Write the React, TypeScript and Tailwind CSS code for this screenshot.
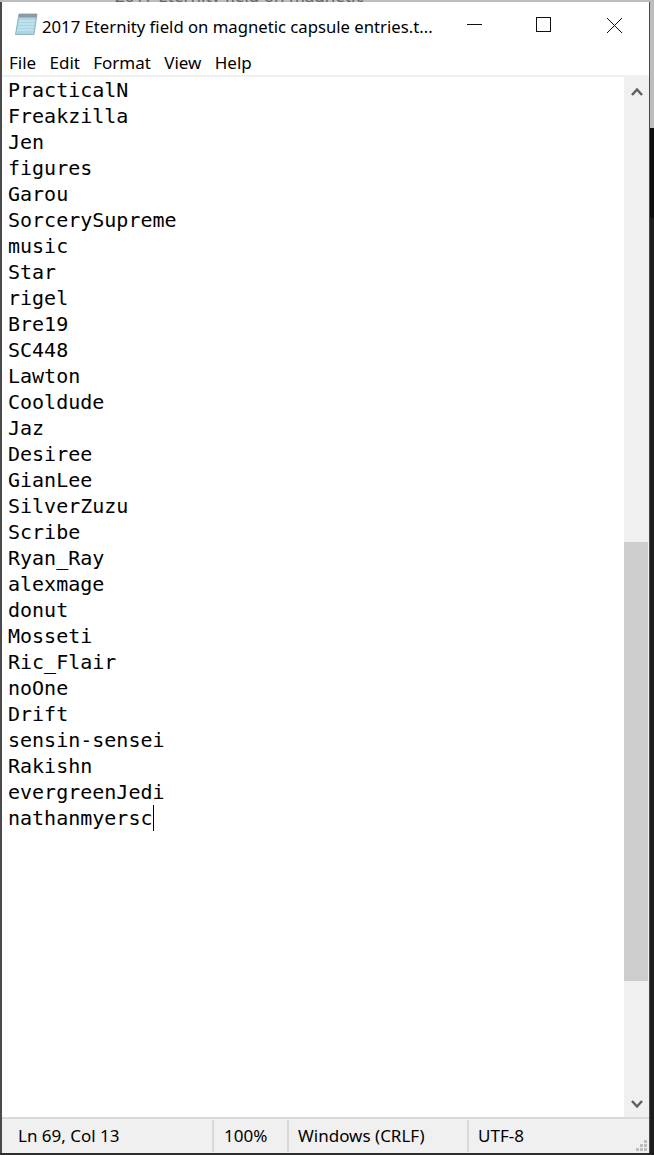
const names = [
  "PracticalN",
  "Freakzilla",
  "Jen",
  "figures",
  "Garou",
  "SorcerySupreme",
  "music",
  "Star",
  "rigel",
  "Bre19",
  "SC448",
  "Lawton",
  "Cooldude",
  "Jaz",
  "Desiree",
  "GianLee",
  "SilverZuzu",
  "Scribe",
  "Ryan_Ray",
  "alexmage",
  "donut",
  "Mosseti",
  "Ric_Flair",
  "noOne",
  "Drift",
  "sensin-sensei",
  "Rakishn",
  "evergreenJedi",
  "nathanmyersc",
];

const menus = ["File", "Edit", "Format", "View", "Help"];

function NotepadIcon() {
  return (
    <svg width="24" height="24" viewBox="0 0 24 24" className="shrink-0">
      <path d="M5 2h18l-3 20.500H1.500z" fill="#a9d5e4" stroke="#8fb4c4" strokeWidth="1" />
      <path d="M5 2h18l-.5 3.500H4.500z" fill="#8b9aa5" />
      <path d="M5 9h15.500M4.500 12h15.500M4 15h15.500M3.500 18h15.500" stroke="#d6edf4" strokeWidth="1" />
    </svg>
  );
}

function App() {
  return (
    <div className="w-[654px] h-[1155px] bg-[#2f2f2f] overflow-hidden font-['Noto_Sans',sans-serif] text-black">
      {/* desktop behind the window, only a sliver shows */}
      <div className="h-[2px] bg-[#bdbdbd] overflow-hidden pl-[115px] flex">
        <span className="text-[17px] leading-[8px] mt-[-8px] text-[#666] whitespace-nowrap">
          2017 Eternity field on magnetic
        </span>
      </div>
      <div className="flex h-[1153px]">
        <div className="w-[650px] h-[1151px] bg-white border-l-2 border-r border-[#4a4a4a] flex flex-col">
          <div className="h-[48px] shrink-0 flex items-start">
            <div className="flex items-start pl-[12px] pt-[10px] w-[465px]">
              <NotepadIcon />
              <span className="ml-[4px] mt-[5px] text-[16.7px] leading-[20px] whitespace-nowrap">
                2017 Eternity field on magnetic capsule entries.t...
              </span>
            </div>
            <svg width="16" height="16" viewBox="0 0 16 16" className="mt-[14px]">
              <path d="M0 8.500h15" stroke="#111" strokeWidth="1" />
            </svg>
            <svg width="16" height="16" viewBox="0 0 16 16" className="ml-[53px] mt-[15px]">
              <rect x="0.500" y="0.500" width="14" height="14" fill="none" stroke="#111" strokeWidth="1" />
            </svg>
            <svg width="17" height="17" viewBox="0 0 17 17" className="ml-[54px] mt-[15px]">
              <path d="M1 1l15 15M16 1L1 16" stroke="#111" strokeWidth="1" />
            </svg>
          </div>
          <div className="h-[27px] shrink-0 flex items-center gap-[13.300px] pl-[7px] text-[17px] leading-[24px] border-b-2 border-[#f0f0f0]">
            {menus.map((m) => (
              <span key={m}>{m}</span>
            ))}
          </div>
          <div className="flex-1 flex min-h-0">
            <div className="flex-1 pl-[6px] font-['DejaVu_Sans_Mono',monospace] text-[20px] leading-[26px]">
              {names.map((n, i) => (
                <div key={n} className="flex items-center h-[26px] whitespace-pre">
                  {n}
                  {i === names.length - 1 && <span className="w-px h-[26px] bg-black" />}
                </div>
              ))}
            </div>
            <div className="w-[25px] bg-[#f0f0f0] flex flex-col items-center justify-between pt-[10px] pb-[8px] relative">
              <svg width="12" height="9" viewBox="0 0 12 9">
                <path d="M1 8l5-5.500 5 5.500" fill="none" stroke="#606060" strokeWidth="2.500" />
              </svg>
              <svg width="12" height="9" viewBox="0 0 12 9">
                <path d="M1 1l5 5.500 5-5.500" fill="none" stroke="#606060" strokeWidth="2.500" />
              </svg>
              <div className="absolute left-0 right-[1px] top-[465px] h-[439px] bg-[#cdcdcd]" />
            </div>
          </div>
          <div className="h-[36px] shrink-0 bg-[#f0f0f0] border-t-2 border-[#d9d9d9] flex text-[17px] leading-[24px] relative">
            <div className="w-[212px] pl-[16px] flex items-center border-r-2 border-[#d9d9d9] my-[1px]">Ln 69, Col 13</div>
            <div className="w-[75px] pl-[10px] flex items-center border-r-2 border-[#d9d9d9] my-[1px]">100%</div>
            <div className="w-[180px] pl-[9px] flex items-center border-r-2 border-[#d9d9d9] my-[1px]">Windows (CRLF)</div>
            <div className="pl-[9px] flex items-center">UTF-8</div>
            <svg width="12" height="12" viewBox="0 0 12 12" className="absolute right-[1px] bottom-[1px]">
              <path d="M8 0h3v3H8zM4 4h3v3H4zM8 4h3v3H8zM0 8h3v3H0zM4 8h3v3H4zM8 8h3v3H8z" fill="#bdbdbd" />
            </svg>
          </div>
        </div>
        <div className="flex-1 flex flex-col">
          <div className="h-[126px] bg-[#bdbdbd]" />
          <div className="h-[90px] bg-[#0e0e0e]" />
          <div className="flex-1 bg-[#1c1c1c]" />
        </div>
      </div>
    </div>
  );
}

export default App;
